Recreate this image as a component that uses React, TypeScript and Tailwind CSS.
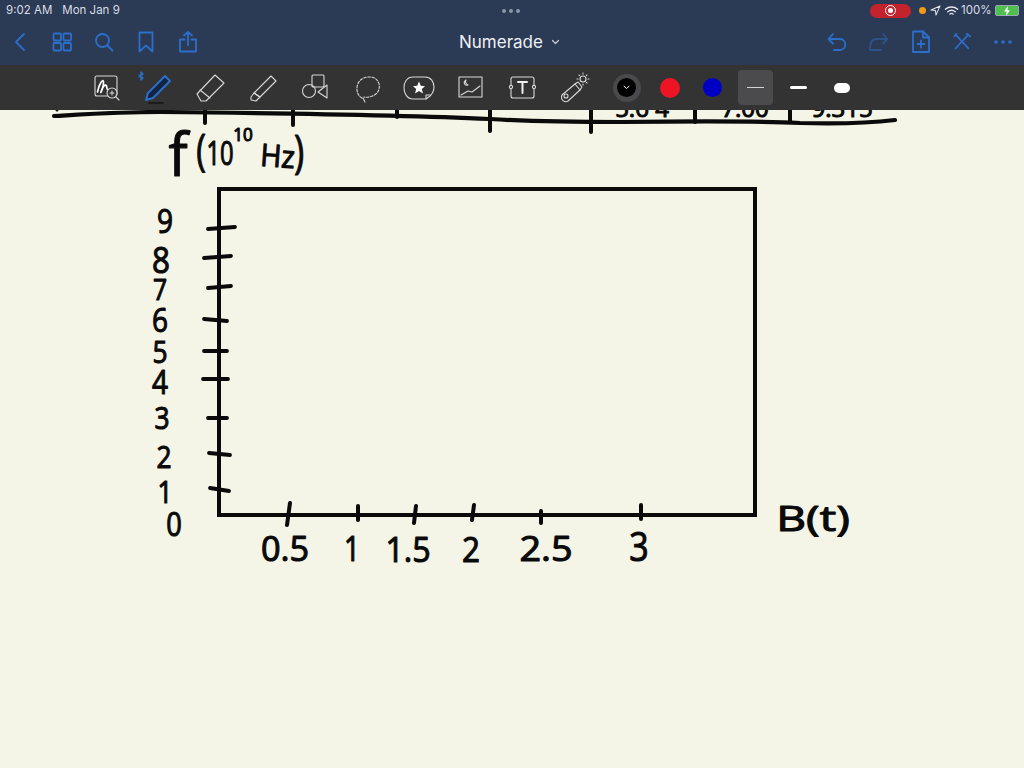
import React from "react";

const blue = "#2c6fcb";

function Nav({ w = 24, h = 24, vb = "0 0 24 24", children }: { w?: number; h?: number; vb?: string; children: React.ReactNode }) {
  return (
    <svg width={w} height={h} viewBox={vb} fill="none" stroke={blue} strokeWidth={1.8} strokeLinecap="round" strokeLinejoin="round">
      {children}
    </svg>
  );
}

function Tool({ children }: { children: React.ReactNode }) {
  return (
    <div className="w-[52px] h-full flex items-center justify-center shrink-0">
      <svg width="40" height="36" viewBox="0 0 40 36" fill="none" stroke="#d8d8d8" strokeWidth={1.1} strokeLinecap="round" strokeLinejoin="round">
        {children}
      </svg>
    </div>
  );
}

function Ink({ x, y, size, sx = 1, rot = 0, w = 500, children }: { x: number; y: number; size: number; sx?: number; rot?: number; w?: number; children: React.ReactNode }) {
  return (
    <text
      transform={`translate(${x} ${y}) rotate(${rot}) scale(${sx} 1)`}
      textAnchor="middle"
      fontFamily="'Open Sans', sans-serif"
      fontWeight={w}
      fontSize={size}
      fill="#0a0a0a"
      stroke="#0a0a0a"
      strokeWidth={1.1}
      strokeLinejoin="round"
    >
      {children}
    </text>
  );
}

function Canvas() {
  const yTicks = [
    [208, 235, 229, 227],
    [204, 231, 258, 256],
    [208, 231, 288, 286],
    [204, 227, 319, 321],
    [204, 227, 351, 351],
    [203, 228, 379, 379],
    [208, 227, 418, 418],
    [209, 230, 453, 455],
    [210, 229, 488, 491],
  ];
  const xTicks = [
    [290, 503, 287, 525],
    [358, 506, 358, 520],
    [416, 506, 414, 523],
    [474, 505, 472, 520],
    [541, 511, 541, 523],
    [641, 505, 641, 519],
  ];
  const topTicks = [
    [205, 123],
    [293, 125],
    [397, 117],
    [490, 131],
    [591, 132],
    [695, 122],
    [790, 122],
  ];
  const digits: [string, number, number, number][] = [
    ["9", 165, 233, 33],
    ["8", 161, 273, 37],
    ["7", 160, 300, 29],
    ["6", 160, 332, 33],
    ["5", 160, 363, 31],
    ["4", 160, 394, 33],
    ["3", 162, 429, 31],
    ["2", 164, 468, 31],
    ["1", 165, 503, 31],
    ["0", 174, 536, 32],
  ];
  return (
    <svg className="block w-full h-full" viewBox="0 110 1024 658" fill="none" stroke="#0a0a0a" strokeLinecap="round">
      <path d="M54 116 C90 114 120 112 160 112 C260 113 400 115 490 119 C540 122 580 122 620 122 C700 121 760 121 800 123 C840 124 870 123 895 120" strokeWidth={4.2} />
      {topTicks.map(([x, y]) => (
        <path key={x} d={`M${x} 108 L${x} ${y}`} strokeWidth={4} />
      ))}
      <path d="M57 109 L57 110" strokeWidth={3} />
      <rect x={219} y={189} width={536} height={326} strokeWidth={4} strokeLinejoin="miter" strokeLinecap="butt" />
      {yTicks.map(([a, b, c, d]) => (
        <path key={c} d={`M${a} ${c} L${b} ${d}`} strokeWidth={3.8} />
      ))}
      {xTicks.map(([a, b, c, d]) => (
        <path key={a} d={`M${a} ${b} L${c} ${d}`} strokeWidth={4} />
      ))}
      <Ink x={642} y={117} size={24} sx={1}>5.6 4</Ink>
      <Ink x={745} y={117} size={24} sx={1}>7.00</Ink>
      <Ink x={842} y={117} size={24} sx={1}>9.315</Ink>
      <Ink x={178} y={176} size={60} sx={0.95}>f</Ink>
      <Ink x={201} y={165} size={44} sx={0.75}>(</Ink>
      <Ink x={220} y={165} size={33} sx={0.72}>10</Ink>
      <Ink x={243} y={141} size={18} sx={0.95}>10</Ink>
      <Ink x={277} y={167} size={31} sx={0.92} rot={4}>Hz</Ink>
      <Ink x={299} y={168} size={46} sx={0.75}>)</Ink>
      {digits.map(([t, x, y, s]) => (
        <Ink key={t} x={x} y={y} size={s} sx={0.85}>{t}</Ink>
      ))}
      <Ink x={285} y={561} size={35} sx={0.98}>0.5</Ink>
      <Ink x={352} y={561} size={35} sx={0.8}>1</Ink>
      <Ink x={408} y={562} size={35} sx={0.92}>1.5</Ink>
      <Ink x={471} y={562} size={35} sx={0.9}>2</Ink>
      <Ink x={546} y={561} size={35} sx={1.08}>2.5</Ink>
      <Ink x={639} y={561} size={40} sx={0.85}>3</Ink>
      <Ink x={813} y={531} size={35} sx={1.32} w={400}>B(t)</Ink>
    </svg>
  );
}

export default function App() {
  return (
    <div className="w-[1024px] h-[768px] flex flex-col overflow-hidden bg-[#f4f4e7] font-['Inter',sans-serif]">
      <header className="h-[65px] shrink-0 bg-[#2b3a55] flex flex-col relative">
        <div className="h-[19px] mt-[1px] flex items-center justify-between pl-[6px] pr-[4px] text-[11.5px] text-[#d8dde6]">
          <div className="flex gap-[10px]">
            <span>9:02 AM</span>
            <span>Mon Jan 9</span>
          </div>
          <div className="flex items-center">
            <div className="w-[41px] h-[14px] rounded-full bg-[#c4232d] flex items-center justify-center mr-[8px]">
              <div className="w-[11px] h-[11px] rounded-full border border-white flex items-center justify-center">
                <div className="w-[5px] h-[5px] rounded-full bg-white" />
              </div>
            </div>
            <div className="w-[7px] h-[7px] rounded-full bg-[#f09a1a] mr-[4px]" />
            <svg width="11" height="11" viewBox="0 0 12 12" className="mr-[3px]" fill="none" stroke="#e4e7ec" strokeWidth="1.1" strokeLinejoin="round">
              <path d="M11 1 L1 5.5 L6 6 L6.5 11 Z" />
            </svg>
            <svg width="15" height="12" viewBox="0 0 16 12" className="mr-[2px]" fill="none" stroke="#e4e7ec" strokeWidth="1.5" strokeLinecap="round">
              <path d="M1.5 4.2 C5 1 11 1 14.5 4.2" />
              <path d="M4 6.8 C6.4 4.8 9.6 4.8 12 6.8" />
              <path d="M6.4 9.2 C7.4 8.4 8.6 8.4 9.6 9.2" />
            </svg>
            <span className="mr-[3px] w-[31px]">100%</span>
            <div className="w-[24px] h-[11px] rounded-[2px] bg-[#4fc04f] border border-[#9aa7b5] flex items-center justify-center mr-[1px]">
              <svg width="8" height="10" viewBox="0 0 8 10" fill="#ffffff"><path d="M5 0 L1 5.6 L3.6 5.6 L3 10 L7 4.2 L4.4 4.2 Z" /></svg>
            </div>
          </div>
        </div>
        <div className="absolute left-[502px] top-[9px] flex gap-[3px]">
          <div className="w-[4px] h-[4px] rounded-full bg-[#8c96a8]" />
          <div className="w-[4px] h-[4px] rounded-full bg-[#8c96a8]" />
          <div className="w-[4px] h-[4px] rounded-full bg-[#8c96a8]" />
        </div>
        <div className="flex-1 relative flex items-center justify-between pl-[8px] pr-[9px] pb-[1px]">
          <div className="flex items-center gap-[18px]">
            <Nav><path d="M16 4 L8 12 L16 20" /></Nav>
            <Nav><rect x="3.5" y="3.5" width="7.5" height="7" rx="1" /><rect x="13.5" y="3.5" width="7.5" height="7" rx="1" /><rect x="3.5" y="13" width="7.5" height="7.5" rx="1" /><rect x="13.5" y="13" width="7.5" height="7.5" rx="1" /></Nav>
            <Nav><circle cx="10.5" cy="10.5" r="6.5" /><path d="M15.5 15.5 L20.5 20.5" /></Nav>
            <Nav><path d="M5.5 2.5 H18.5 V21.5 L12 15.5 L5.5 21.5 Z" /></Nav>
            <Nav><path d="M8.5 9.5 H4 V21.5 H20 V9.5 H15.5" /><path d="M12 15 V2 M8 5.5 L12 2 L16 5.5" /></Nav>
          </div>
          <div className="flex items-center gap-[18px]">
            <Nav><path d="M8 4 L3.5 9 L8 13.5" /><path d="M4 9 H15 C22 9 22 20 15 20 H9" /></Nav>
            <svg width="24" height="24" viewBox="0 0 24 24" fill="none" stroke="#2c5288" strokeWidth={1.8} strokeLinecap="round" strokeLinejoin="round"><path d="M16 4 L20.5 9 L16 13.5" /><path d="M20 9 H9 C3 9 3 16 3 20 H14" /></svg>
            <Nav><path d="M4 1.5 H14 L20 7.5 V22 H4 Z" /><path d="M14 1.5 V7.5 H20" /><path d="M12 10.5 V17.5 M8.5 14 H15.5" /></Nav>
            <Nav w={22}><path d="M5 4 L19 19 M19 4 L5 19" /><path d="M3.5 6 L6 3 M17 3 L21 6" /></Nav>
            <svg width="24" height="24" viewBox="0 0 24 24" fill={blue}><circle cx="5" cy="12" r="1.8" /><circle cx="12" cy="12" r="1.8" /><circle cx="19" cy="12" r="1.8" /></svg>
          </div>
          <div className="absolute left-[459px] top-[11px] flex items-center gap-[8px] text-[#eef0f4]">
            <span className="text-[17px] leading-[22px]">Numerade</span>
            <svg width="9" height="6" viewBox="0 0 9 6" fill="none" stroke="#c8ced8" strokeWidth="1.2" strokeLinecap="round" strokeLinejoin="round"><path d="M1.5 1.5 L4.5 4.5 L7.5 1.5" /></svg>
          </div>
        </div>
      </header>

      <div className="h-[45px] shrink-0 bg-[#333333] flex items-center pl-[80px]">
        <Tool>
          <rect x="9" y="6" width="22" height="20" rx="2" />
          <path d="M11.5 22 C13 14 17 8 17.5 12 C18 17 14 24 15 22 C16 18 19 13 20.5 16 C21 18 21 20 22 20" strokeWidth={1.7} stroke="#ffffff" />
          <circle cx="26" cy="23" r="5" fill="#333333" />
          <path d="M26 21 V25 M24 23 H28 M30 27 L33 30" />
        </Tool>
        <Tool>
          <path d="M8 30 L10 23 L27 6 L32 11 L15 28 Z" fill="#14233f" stroke="#2c6fcb" strokeWidth={2} />
          <path d="M11 33 H25" stroke="#1c1c1c" strokeWidth={1.8} />
          <path d="M1 5 L5 8 L3 10 L3 2 L5 4 L1 7" stroke="#2c6fcb" strokeWidth={1.4} />
        </Tool>
        <Tool>
          <path d="M7 24 L25 5 L34 13 L16 31 L11 31 Z" />
          <path d="M10 20 L20 28" />
        </Tool>
        <Tool>
          <path d="M12 23 L29 6 L34 11 L18 27 Z" />
          <path d="M12 23 L18 27 L14 31 L9 30 L9 27 Z" />
        </Tool>
        <Tool>
          <rect x="18" y="5" width="12" height="12" rx="1" />
          <circle cx="15" cy="21" r="6.5" />
          <path d="M33 15 V28 L24 22 Z" />
        </Tool>
        <Tool>
          <path d="M16 28 C8 24 9 8 22 7 C33 6 36 17 31 23 C28 26 22 28 18 27" strokeDasharray="2.5 1.6" />
          <path d="M17 28 L19 32" />
        </Tool>
        <Tool>
          <path d="M15 7 H27 C33 7 36 12 36 17 C36 21 34 24 32 26 L28 29 H15 C9 29 6 23 6 18 C6 12 9 7 15 7 Z" />
          <path d="M21 11.5 L22.8 15.8 L27 16.2 L23.8 19 L25 23.5 L21 21 L17 23.5 L18.2 19 L15 16.2 L19.2 15.8 Z" fill="#ffffff" stroke="none" />
          <path d="M28 29 L28 25 L32 25" />
        </Tool>
        <Tool>
          <rect x="9" y="7" width="23" height="20" />
          <path d="M16 10 C13 12 14 16 18 15 C16 14 15 12 16 10 Z" />
          <path d="M11 25 L18 21 L22 22 L30 16" />
        </Tool>
        <Tool>
          <rect x="9" y="7" width="23" height="21" rx="2" />
          <path d="M16 12 H25 M20.5 12 V23" strokeWidth={2} stroke="#f0f0f0" />
          <circle cx="9" cy="17" r="1.6" fill="#333333" />
          <circle cx="32" cy="17" r="1.6" fill="#333333" />
        </Tool>
        <Tool>
          <path d="M8 25 L21 14 L26 20 L14 31 C11 33 6 30 8 25 Z" />
          <circle cx="12" cy="26" r="2" />
          <path d="M21 14 L24 12 L28 17 L26 20" />
          <circle cx="29" cy="9" r="3" />
          <path d="M29 3 V4 M29 14 V15 M23 9 H24 M34 9 H35 M25 5 L25.6 5.6 M33 5 L32.4 5.6 M33 13 L32.4 12.4" />
        </Tool>
        <div className="flex items-center h-full ml-[5px]">
          <div className="w-[43px] flex items-center justify-center">
            <div className="w-[28px] h-[28px] rounded-full bg-[#4a4a4c] flex items-center justify-center">
              <div className="w-[19px] h-[19px] rounded-full bg-black flex items-center justify-center">
                <svg width="7" height="5" viewBox="0 0 7 5" fill="none" stroke="#ffffff" strokeWidth="1" strokeLinecap="round"><path d="M1 1.2 L3.5 3.5 L6 1.2" /></svg>
              </div>
            </div>
          </div>
          <div className="w-[43px] flex items-center justify-center">
            <div className="w-[20px] h-[20px] rounded-full bg-[#ee1423]" />
          </div>
          <div className="w-[43px] flex items-center justify-center">
            <div className="w-[19px] h-[19px] rounded-full bg-[#0000c4]" />
          </div>
          <div className="w-[43px] flex items-center justify-center">
            <div className="w-[35px] h-[35px] rounded-[4px] bg-[#4b4b4d] flex items-center justify-center">
              <div className="w-[17px] h-[1.5px] bg-[#d4d4d4]" />
            </div>
          </div>
          <div className="w-[43px] flex items-center justify-center">
            <div className="w-[17px] h-[3px] rounded-full bg-white" />
          </div>
          <div className="w-[43px] flex items-center justify-center">
            <div className="w-[16px] h-[10px] rounded-full bg-white" />
          </div>
        </div>
      </div>

      <main className="flex-1 min-h-0">
        <Canvas />
      </main>
    </div>
  );
}
